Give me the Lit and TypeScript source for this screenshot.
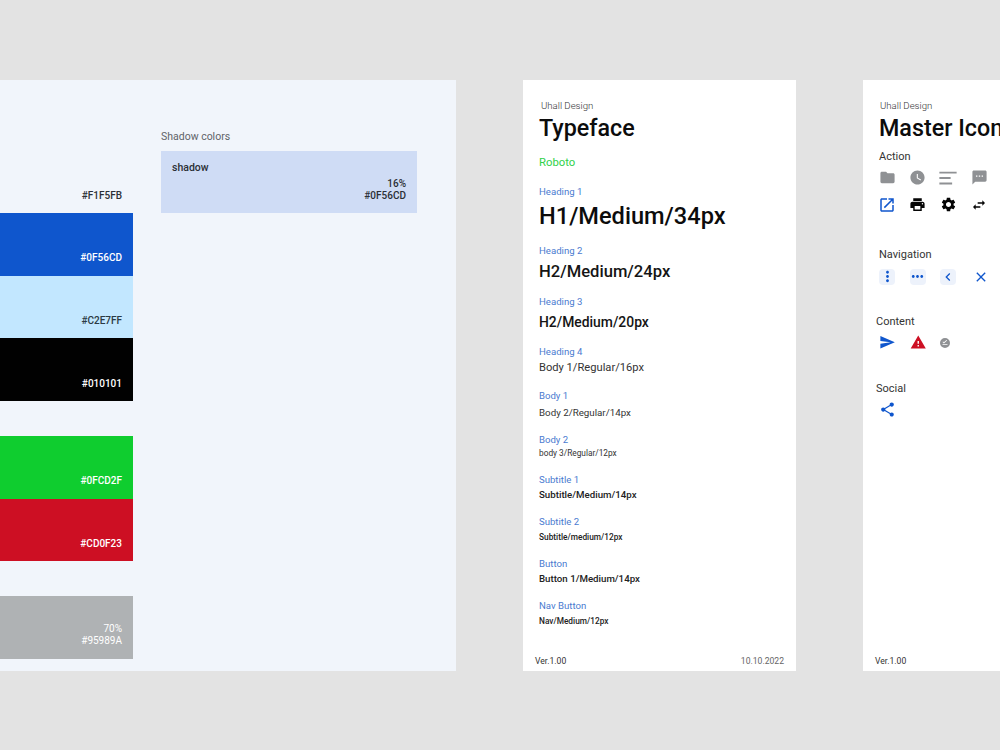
import { LitElement, html, css, svg } from "lit";
import { customElement } from "lit/decorators.js";

const P: Record<string, any> = {
  folder: svg`<path d="M10 4H4c-1.1 0-1.99.9-1.99 2L2 18c0 1.1.9 2 2 2h16c1.1 0 2-.9 2-2V8c0-1.1-.9-2-2-2h-8l-2-2z"/>`,
  clock: svg`<path d="M11.99 2C6.47 2 2 6.48 2 12s4.47 10 9.99 10C17.52 22 22 17.52 22 12S17.52 2 11.99 2zm4.24 14.24L11 13V7h1.5v5.25l4.5 2.67-.77 1.32z"/>`,
  lines: svg`<path d="M.5 3.5h23v2.6H.5zM.5 10.7h15v2.6H.5zM.5 17.9h17v2.6H.5z"/>`,
  chat: svg`<path d="M20 2H4c-1.1 0-2 .9-2 2v18l4-4h14c1.1 0 2-.9 2-2V4c0-1.1-.9-2-2-2zM9 11H7V9h2v2zm4 0h-2V9h2v2zm4 0h-2V9h2v2z"/>`,
  open: svg`<path d="M19 19H5V5h7V3H5c-1.11 0-2 .9-2 2v14c0 1.1.89 2 2 2h14c1.1 0 2-.9 2-2v-7h-2v7zM14 3v2h3.59l-9.83 9.83 1.41 1.41L19 6.41V10h2V3h-7z"/>`,
  print: svg`<path d="M19 8H5c-1.66 0-3 1.34-3 3v6h4v4h12v-4h4v-6c0-1.66-1.34-3-3-3zm-3 11H8v-5h8v5zm3-7c-.55 0-1-.45-1-1s.45-1 1-1 1 .45 1 1-.45 1-1 1zm-1-9H6v4h12V3z"/>`,
  gear: svg`<path d="M19.14 12.94c.04-.3.06-.61.06-.94 0-.32-.02-.64-.07-.94l2.03-1.58c.18-.14.23-.41.12-.61l-1.92-3.32c-.12-.22-.37-.29-.59-.22l-2.39.96c-.5-.38-1.03-.7-1.62-.94l-.36-2.54c-.04-.24-.24-.41-.48-.41h-3.84c-.24 0-.43.17-.47.41l-.36 2.54c-.59.24-1.13.57-1.62.94l-2.39-.96c-.22-.08-.47 0-.59.22L2.74 8.87c-.12.21-.08.47.12.61l2.03 1.58c-.05.3-.09.63-.09.94s.02.64.07.94l-2.03 1.58c-.18.14-.23.41-.12.61l1.92 3.32c.12.22.37.29.59.22l2.39-.96c.5.38 1.03.7 1.62.94l.36 2.54c.05.24.24.41.48.41h3.84c.24 0 .44-.17.47-.41l.36-2.54c.59-.24 1.13-.56 1.62-.94l2.39.96c.22.08.47 0 .59-.22l1.92-3.32c.12-.22.07-.47-.12-.61l-2.01-1.58zM12 15.6c-1.98 0-3.6-1.62-3.6-3.6s1.62-3.6 3.6-3.6 3.6 1.62 3.6 3.6-1.62 3.6-3.6 3.6z"/>`,
  swap: svg`<path d="M6.99 11L3 15l3.99 4v-3H14v-2H6.99v-3zM21 9l-4-4v3h-7v2h7v3l4-4z"/>`,
  vert: svg`<path d="M12 8c1.1 0 2-.9 2-2s-.9-2-2-2-2 .9-2 2 .9 2 2 2zm0 2c-1.1 0-2 .9-2 2s.9 2 2 2 2-.9 2-2-.9-2-2-2zm0 6c-1.1 0-2 .9-2 2s.9 2 2 2 2-.9 2-2-.9-2-2-2z"/>`,
  horiz: svg`<path d="M6 10c-1.1 0-2 .9-2 2s.9 2 2 2 2-.9 2-2-.9-2-2-2zm12 0c-1.1 0-2 .9-2 2s.9 2 2 2 2-.9 2-2-.9-2-2-2zm-6 0c-1.1 0-2 .9-2 2s.9 2 2 2 2-.9 2-2-.9-2-2-2z"/>`,
  chev: svg`<path d="M15.41 7.41L14 6l-6 6 6 6 1.41-1.41L10.83 12z"/>`,
  close: svg`<path d="M19 6.41L17.59 5 12 10.59 6.41 5 5 6.41 10.59 12 5 17.59 6.41 19 12 13.41 17.59 19 19 17.59 13.41 12z"/>`,
  send: svg`<path d="M2.01 21L23 12 2.01 3 2 10l15 2-15 2z"/>`,
  warn: svg`<path d="M1 21h22L12 2 1 21zm12-3h-2v-2h2v2zm0-4h-2v-4h2v4z"/>`,
  check: svg`<path d="M12 2a10 10 0 1 0 0 20 10 10 0 0 0 0-20zm-5 14v-1.6h10V16zm2.8-3.2L7 10l1.2-1.2 1.6 1.6L15 6l1.2 1.2z"/>`,
  share: svg`<path d="M18 16.08c-.76 0-1.44.3-1.96.77L8.91 12.7c.05-.23.09-.46.09-.7s-.04-.47-.09-.7l7.05-4.11c.54.5 1.25.81 2.04.81 1.66 0 3-1.34 3-3s-1.34-3-3-3-3 1.34-3 3c0 .24.04.47.09.7L8.04 9.81C7.5 9.31 6.79 9 6 9c-1.66 0-3 1.34-3 3s1.34 3 3 3c.79 0 1.5-.31 2.04-.81l7.12 4.16c-.05.21-.08.43-.08.65 0 1.61 1.31 2.92 2.92 2.92s2.92-1.31 2.92-2.92-1.31-2.92-2.92-2.92z"/>`,
};

const ic = (name: string, cls: string) =>
  html`<svg class="ic ${cls}" viewBox="0 0 24 24">${P[name]}</svg>`;

@customElement("app-root")
export class AppRoot extends LitElement {
  static styles = css`
    :host {
      display: block;
      width: 1000px;
      height: 750px;
      overflow: hidden;
      background: #e3e3e3;
      font-family: Roboto, "Liberation Sans", sans-serif;
      color: #1a1a1a;
    }
    .page { display: flex; padding-top: 80px; width: 1400px; align-items: flex-start; }
    .panel { height: 591px; flex: none; display: flex; flex-direction: column; box-sizing: border-box; }

    /* colours */
    .colors { width: 456px; background: #f1f5fb; flex-direction: row; gap: 28px; padding-top: 50px; margin-right: 67px; }
    .col { width: 133px; flex: none; display: flex; flex-direction: column; margin-top: 20.7px; }
    .sw {
      height: 62.6px; box-sizing: border-box; padding: 0 11px 11.5px;
      display: flex; flex-direction: column; justify-content: flex-end; align-items: flex-end;
      font-size: 10px; font-weight: 500; line-height: 12px; color: #fff;
    }
    .gap { margin-top: 35px; }
    .light { background: #f1f5fb; color: #2b2f36; }
    .blue { background: #0f56cd; }
    .sky { background: #c2e7ff; color: #2b3a44; }
    .black { background: #010101; }
    .green { background: #0fcd2f; }
    .red { background: #cd0f23; }
    .grey { background: #afb2b4; font-weight: 400; }
    .shadow-col { width: 256px; flex: none; }
    .shadow-title { font-size: 10.5px; line-height: 14px; color: #5f6368; margin-bottom: 7px; }
    .shadow {
      height: 62.3px; background: #cfdcf5; box-sizing: border-box; padding: 10px 11px 11.2px;
      display: flex; flex-direction: column; font-size: 10px; line-height: 12px; font-weight: 500; color: #2b2f36;
    }
    .shadow .name { font-size: 10.5px; line-height: 13px; }
    .shadow .vals { margin-top: auto; text-align: right; }

    /* typeface */
    .type { width: 273px; background: #fff; padding: 19px 12px 3px 16px; margin-right: 67px; }
    .brand { font-size: 9.6px; line-height: 14px; height: 14px; color: #333; margin-left: 2px; font-weight: 300; }
    .title { font-size: 23.3px; font-weight: 500; line-height: 30px; height: 31px; color: #0c0c0c; white-space: nowrap; }
    .roboto { font-size: 11.3px; line-height: 14px; color: #2fd14a; margin-top: 12px; }
    .l { font-size: 9.6px; line-height: 14px; height: 14px; color: #4a7bd0; }
    .m15 { margin-top: 15px; } .m13 { margin-top: 13px; } .m9 { margin-top: 9px; }
    .m8 { margin-top: 8px; } .m10 { margin-top: 10px; } .m12 { margin-top: 12px; }
    .h1 { font-size: 23.6px; font-weight: 500; line-height: 30px; margin-top: 2px; color: #0c0c0c; }
    .h2 { font-size: 16.6px; font-weight: 500; line-height: 27px; height: 28px; color: #151515; }
    .h3 { font-size: 13.9px; font-weight: 500; line-height: 26px; height: 28px; color: #151515; }
    .b1 { font-size: 11.15px; line-height: 18px; height: 20px; color: #333; }
    .b2 { font-size: 9.75px; line-height: 20px; color: #333; }
    .b3 { font-size: 8.3px; line-height: 12px; height: 14px; color: #333; }
    .s1 { font-size: 9.7px; font-weight: 500; line-height: 16px; color: #222; }
    .s2 { font-size: 8.3px; font-weight: 500; line-height: 16px; height: 18px; color: #222; }
    .foot { margin-top: auto; margin-left: -4px; display: flex; justify-content: space-between; font-size: 8.6px; line-height: 13px; color: #333; }
    .foot .date { color: #666; }

    /* icons */
    .icons { width: 400px; background: #fff; padding: 19px 0 3px 9px; }
    .icons .brand { margin-left: 8px; }
    .icons .title { margin-left: 7px; }
    .sec { font-size: 11px; line-height: 14px; height: 14px; color: #333; }
    .in7 { margin-left: 7px; } .in4 { margin-left: 4px; }
    .foot.in3 { margin-left: 3px; }
    .row { display: grid; grid-template-columns: repeat(4, 30.6px); height: 27px; align-items: center; justify-items: center; }
    .ic { display: block; fill: currentColor; width: 17px; height: 17px; }
    .ic.lg { width: 18px; height: 18px; }
    .ic.md { width: 16px; height: 16px; }
    .muted { color: #8f9194; }
    .bl { color: #0f56cd; }
    .dark { color: #050505; }
    .rd { color: #cd0f23; }
    .chip { width: 16px; height: 16px; background: #edf2fb; border-radius: 4px; display: flex; align-items: center; justify-content: center; color: #0f56cd; overflow: hidden; }
    .chip .ic { flex: none; }
    .close { margin-left: 4px; }
    .tiny { width: 12px; height: 12px; margin-right: 6px; }
    .ic.send { width: 16.5px; height: 16.5px; }
    .t1 { margin-top: 6px; }
    .t2 { margin-top: 30px; }
    .t3 { margin-top: 25px; }
    .t4 { margin-top: 26px; }
    .r1 { margin-top: 1px; }
  `;

  render() {
    return html`<div class="page">
      <section class="panel colors">
        <div class="col">
          <div class="sw light">#F1F5FB</div>
          <div class="sw blue">#0F56CD</div>
          <div class="sw sky">#C2E7FF</div>
          <div class="sw black">#010101</div>
          <div class="sw green gap">#0FCD2F</div>
          <div class="sw red">#CD0F23</div>
          <div class="sw grey gap"><span>70%</span><span>#95989A</span></div>
        </div>
        <div class="shadow-col">
          <div class="shadow-title">Shadow colors</div>
          <div class="shadow">
            <span class="name">shadow</span>
            <div class="vals">16%<br />#0F56CD</div>
          </div>
        </div>
      </section>

      <section class="panel type">
        <div class="brand">Uhall Design</div>
        <div class="title">Typeface</div>
        <div class="roboto">Roboto</div>
        <div class="l m15">Heading 1</div>
        <div class="h1">H1/Medium/34px</div>
        <div class="l m13">Heading 2</div>
        <div class="h2">H2/Medium/24px</div>
        <div class="l m9">Heading 3</div>
        <div class="h3">H2/Medium/20px</div>
        <div class="l m8">Heading 4</div>
        <div class="b1">Body 1/Regular/16px</div>
        <div class="l m10">Body 1</div>
        <div class="b2">Body 2/Regular/14px</div>
        <div class="l m10">Body 2</div>
        <div class="b3">body 3/Regular/12px</div>
        <div class="l m12">Subtitle 1</div>
        <div class="s1">Subtitle/Medium/14px</div>
        <div class="l m12">Subtitle 2</div>
        <div class="s2">Subtitle/medium/12px</div>
        <div class="l m10">Button</div>
        <div class="s1">Button 1/Medium/14px</div>
        <div class="l m12">Nav Button</div>
        <div class="s2">Nav/Medium/12px</div>
        <div class="foot"><span>Ver.1.00</span><span class="date">10.10.2022</span></div>
      </section>

      <section class="panel icons">
        <div class="brand">Uhall Design</div>
        <div class="title">Master Icons</div>
        <div class="sec in7 t1">Action</div>
        <div class="row">
          ${ic("folder", "muted")}${ic("clock", "muted")}${ic("lines", "muted lg")}${ic("chat", "muted")}
        </div>
        <div class="row">
          ${ic("open", "bl lg")}${ic("print", "dark")}${ic("gear", "dark")}${ic("swap", "dark md")}
        </div>
        <div class="sec in7 t2">Navigation</div>
        <div class="row r1">
          <div class="chip">${ic("vert", "")}</div>
          <div class="chip">${ic("horiz", "")}</div>
          <div class="chip">${ic("chev", "md")}</div>
          ${ic("close", "bl md close")}
        </div>
        <div class="sec in4 t3">Content</div>
        <div class="row">
          ${ic("send", "bl send")}${ic("warn", "rd send")}${ic("check", "muted tiny")}
        </div>
        <div class="sec in4 t4">Social</div>
        <div class="row">${ic("share", "bl")}</div>
        <div class="foot in3"><span>Ver.1.00</span></div>
      </section>
    </div>`;
  }
}
